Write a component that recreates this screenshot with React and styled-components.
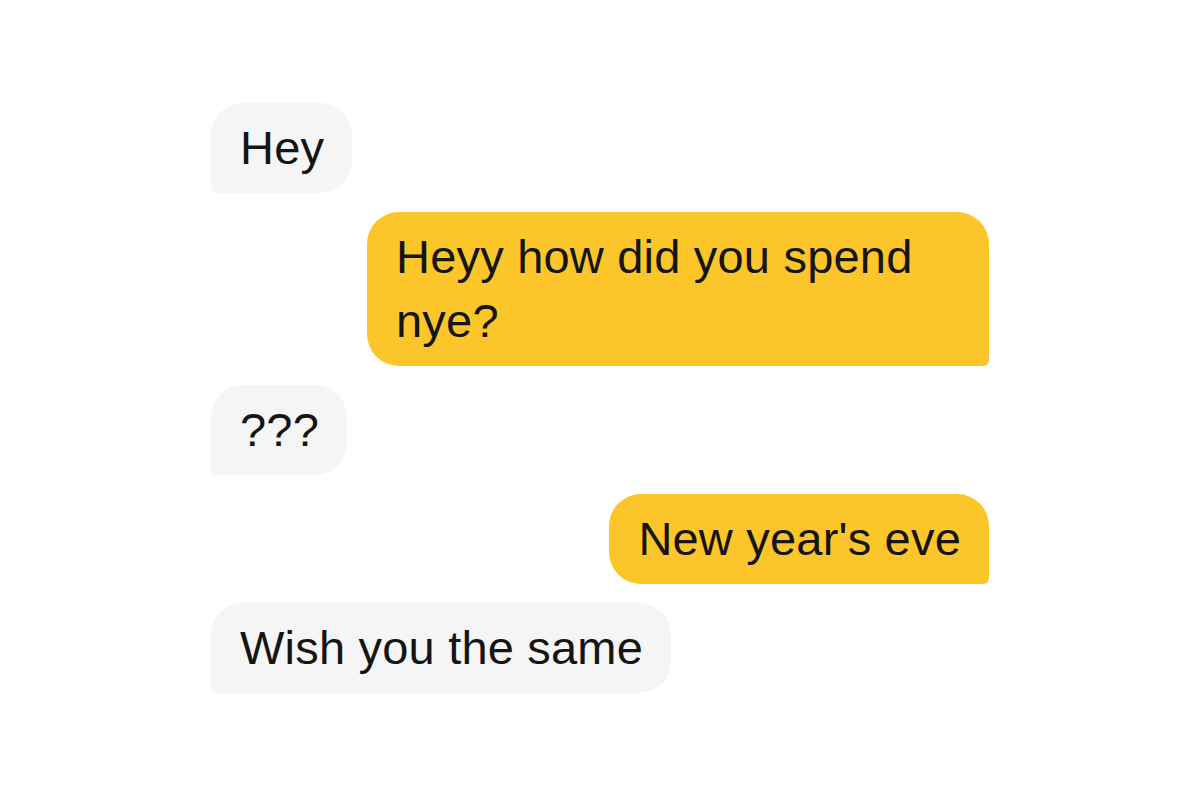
import React from "react";
import styled, { createGlobalStyle } from "styled-components";

const Global = createGlobalStyle`
  html, body { margin: 0; padding: 0; background: #ffffff; }
  body { font-family: "Liberation Sans", Arial, sans-serif; }
`;

const Page = styled.div`
  width: 1200px;
  height: 800px;
  display: flex;
  justify-content: center;
  padding-top: 103px;
  box-sizing: border-box;
`;

const Thread = styled.div`
  width: 778px;
  display: flex;
  flex-direction: column;
  gap: 19px;
`;

const Bubble = styled.div`
  align-self: ${(p) => (p.$mine ? "flex-end" : "flex-start")};
  max-width: 622px;
  box-sizing: border-box;
  padding: 13px 28px 13px 29px;
  font-size: 47px;
  line-height: 64px;
  letter-spacing: 0.2px;
  color: #151515;
  background: ${(p) => (p.$mine ? "#fcc52a" : "#f5f5f5")};
  border-radius: ${(p) => (p.$mine ? "32px 32px 6px 32px" : "32px 32px 32px 6px")};
`;

const messages = [
  { text: "Hey", mine: false },
  { text: "Heyy how did you spend nye?", mine: true },
  { text: "???", mine: false },
  { text: "New year's eve", mine: true },
  { text: "Wish you the same", mine: false },
];

export default function App() {
  return (
    <>
      <Global />
      <Page>
        <Thread>
          {messages.map((m, i) => (
            <Bubble key={i} $mine={m.mine}>
              {m.text}
            </Bubble>
          ))}
        </Thread>
      </Page>
    </>
  );
}
